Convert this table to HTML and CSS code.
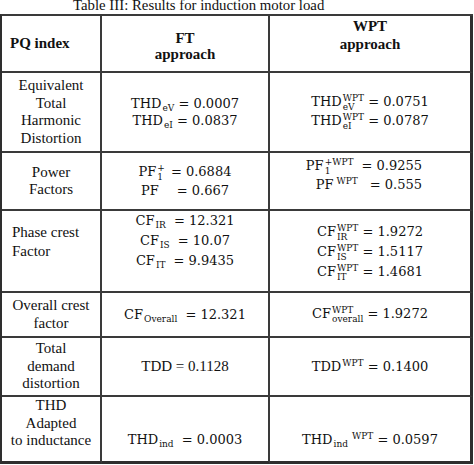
FILE: index.html
```html
<!DOCTYPE html>
<html>
<head>
<meta charset="utf-8">
<link rel="stylesheet" href="styles.css">
</head>
<body>
<div class="caption">Table III: Results for induction motor load</div>
<div class="tbl">
  <!-- header -->
  <div class="c c1 r1 hd-pq">PQ index</div>
  <div class="c c2 r1 hd-ft"><div>FT</div><div>approach</div></div>
  <div class="c c3 r1 hd-wpt"><div>WPT</div><div>approach</div></div>

  <!-- row 2 -->
  <div class="c c1 r2 lbl"><div>Equivalent</div><div>Total</div><div>Harmonic</div><div>Distortion</div></div>
  <div class="c c2 r2 val v17">
    <div class="m">THD<span class="sub">eV</span> = 0.0007</div>
    <div class="m">THD<span class="sub">eI</span> = 0.0837</div>
  </div>
  <div class="c c3 r2 val v17">
    <div class="m">THD<span class="ss"><span>WPT</span><span>eV</span></span> = 0.0751</div>
    <div class="m">THD<span class="ss"><span>WPT</span><span>eI</span></span> = 0.0787</div>
  </div>

  <!-- row 3 -->
  <div class="c c1 r3 lbl"><div>Power</div><div>Factors</div></div>
  <div class="c c2 r3 val v18">
    <div class="m">PF<span class="ss"><span>+</span><span>1</span></span><span class="g6"></span>= 0.6884</div>
    <div class="m">PF<span class="g18"></span>= 0.667</div>
  </div>
  <div class="c c3 r3 val v18 pf-wpt">
    <div class="m">PF<span class="ss"><span>+WPT</span><span>1</span></span><span class="g8"></span>= 0.9255</div>
    <div class="m">PF<span class="sup sp-gap">WPT</span><span class="g12"></span>= 0.555</div>
  </div>

  <!-- row 4 -->
  <div class="c c1 r4 lbl-left"><div>Phase crest</div><div>Factor</div></div>
  <div class="c c2 r4 val v20 cf-ft">
    <div class="m">CF<span class="sub">IR</span><span class="g4"></span> = 12.321</div>
    <div class="m">CF<span class="sub">IS</span><span class="g4"></span> = 10.07</div>
    <div class="m">CF<span class="sub">IT</span><span class="g4"></span> = 9.9435</div>
  </div>
  <div class="c c3 r4 val v20 cf-wpt">
    <div class="m">CF<span class="ss"><span>WPT</span><span>IR</span></span> = 1.9272</div>
    <div class="m">CF<span class="ss"><span>WPT</span><span>IS</span></span> = 1.5117</div>
    <div class="m">CF<span class="ss"><span>WPT</span><span>IT</span></span> = 1.4681</div>
  </div>

  <!-- row 5 -->
  <div class="c c1 r5 lbl"><div>Overall crest</div><div>factor</div></div>
  <div class="c c2 r5 val">
    <div class="m">CF<span class="sub">Overall</span><span class="g4"></span> = 12.321</div>
  </div>
  <div class="c c3 r5 val">
    <div class="m">CF<span class="ss"><span>WPT</span><span>overall</span></span> = 1.9272</div>
  </div>

  <!-- row 6 -->
  <div class="c c1 r6 lbl"><div>Total</div><div>demand</div><div>distortion</div></div>
  <div class="c c2 r6 val">
    <div class="times">TDD = 0.1128</div>
  </div>
  <div class="c c3 r6 val">
    <div class="m">TDD<span class="sup">WPT</span> = 0.1400</div>
  </div>

  <!-- row 7 -->
  <div class="c c1 r7 lbl lbl-top"><div>THD</div><div>Adapted</div><div>to inductance</div></div>
  <div class="c c2 r7 val val-low">
    <div class="m">THD<span class="sub">ind</span><span class="g4"></span> = 0.0003</div>
  </div>
  <div class="c c3 r7 val val-low">
    <div class="m">THD<span class="sub">ind</span><span class="sup sp-gap2">WPT</span> = 0.0597</div>
  </div>
</div>
</body>
</html>
```

FILE: styles.css
```css
html, body {
  margin: 0;
  padding: 0;
  background: #ffffff;
  color: #111111;
}

body {
  width: 474px;
  height: 465px;
  overflow: hidden;
  font-family: "Liberation Serif", "Times New Roman", serif;
}

.caption {
  height: 10px;
  line-height: 10px;
  font-size: 14.8px;
  padding-left: 73px;
  margin-bottom: 4px;
  white-space: nowrap;
}

.tbl {
  display: grid;
  grid-template-columns: 100px 168px 203px;
  grid-template-rows: 57px 80px 58px 82px 45px 59px 67px;
  border-left: 2px solid #2e2e2e;
  border-top: 2px solid #3a3a3a;
  width: 471px;
}

.c {
  box-sizing: border-box;
  border-right: 2px solid #3a3a3a;
  border-bottom: 2px solid #3a3a3a;
  display: flex;
  flex-direction: column;
  justify-content: center;
  align-items: center;
  font-size: 15px;
  white-space: nowrap;
}

.c3 {
  border-right: 3px solid #2e2e2e;
}

.r7 {
  border-bottom: 3px solid #2e2e2e;
}

.hd-pq {
  font-weight: bold;
  align-items: flex-start;
  padding-left: 8px;
}

.hd-ft {
  font-weight: bold;
  line-height: 16px;
  padding-top: 4px;
}

.hd-wpt {
  font-weight: bold;
  line-height: 18px;
  justify-content: flex-start;
  padding-top: 1px;
}

.lbl {
  line-height: 17.5px;
  text-align: center;
}

.lbl-left {
  align-items: flex-start;
  justify-content: flex-start;
  padding-left: 10px;
  padding-top: 12px;
  line-height: 18.5px;
}

.lbl-top {
  justify-content: flex-start;
  padding-top: 0px;
  line-height: 17.5px;
}

.val .m, .val .times {
  line-height: 17px;
}

.v17 .m { line-height: 17px; }
.v18 .m { line-height: 18px; }
.v20 .m { line-height: 20px; }

.cf-ft { padding-bottom: 20px; }
.cf-wpt { padding-top: 1px; }

.pf-wpt {
  align-items: flex-end;
  padding-right: 48px;
  padding-bottom: 12px;
}

.val-low {
  justify-content: flex-end;
  padding-bottom: 13px;
}

.m {
  font-family: "DejaVu Serif", serif;
  font-size: 13px;
  color: #111111;
}

.times {
  font-family: "Liberation Serif", "Times New Roman", serif;
  font-size: 15px;
}

.sub {
  font-size: 9px;
  line-height: 0;
  vertical-align: -3px;
  margin-left: 1px;
}

.sup {
  font-size: 9px;
  line-height: 0;
  vertical-align: 5px;
  margin-left: 1px;
}

.ss {
  display: inline-flex;
  flex-direction: column;
  font-size: 9px;
  line-height: 9px;
  vertical-align: 5px;
  margin-left: 1px;
}

.sp-gap { margin-left: 3px; }
.sp-gap2 { margin-left: 4px; }

.g4 { display: inline-block; width: 4px; }
.g6 { display: inline-block; width: 6px; }
.g8 { display: inline-block; width: 8px; }
.g12 { display: inline-block; width: 12px; }
.g18 { display: inline-block; width: 18px; }
```
